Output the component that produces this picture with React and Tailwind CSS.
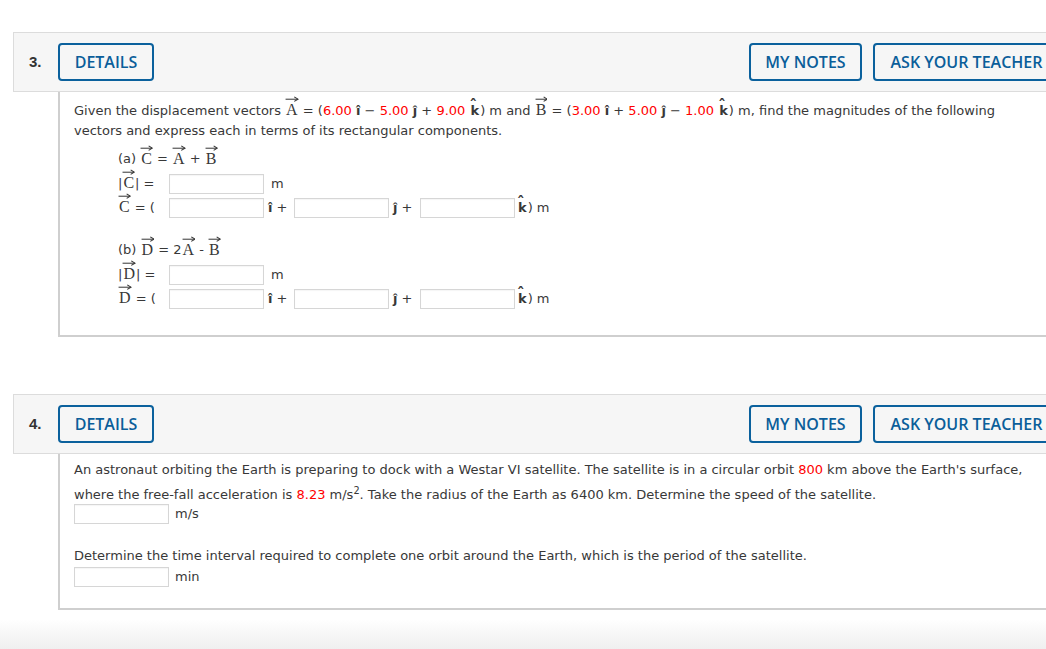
import React from 'react';

const body = { fontFamily: '"DejaVu Sans", Verdana, sans-serif' };

// letter with an arrow drawn over it
const Vec = ({ children }) => (
    <span className="relative inline-block px-[1px] text-[16px] leading-none" style={{ fontFamily: '"Liberation Serif", "Times New Roman", serif' }}>
        {children}
        <svg className="absolute left-0 -top-[6px] w-full h-[6px]" viewBox="0 0 12 6" preserveAspectRatio="none">
            <path d="M0.5 3.2 H11.3" stroke="#333" strokeWidth="1" fill="none" />
            <path d="M8.2 0.8 L11.6 3.2 L8.2 5.4" stroke="#333" strokeWidth="1" fill="none" />
        </svg>
    </span>
);

const Hat = ({ children }) => (
    <span className="relative inline-block font-bold px-[1px]">
        {children}
        <span className="absolute left-[0px] -top-[2px] text-[15px] font-bold leading-none">ˆ</span>
    </span>
);

const Red = ({ children }) => <span className="text-[#f00]">{children}</span>;

const Box = ({ w = 'w-[95px]' }) => (
    <input type="text" className={`${w} h-[20px] border border-[#d6d6d6] bg-white shadow-[inset_0_1px_1px_rgba(0,0,0,0.04)] outline-none`} />
);

const Header = ({ num }) => (
    <div className="flex items-center h-[60px] border border-[#dcdcdc] bg-[#f6f6f6]">
        <span className="w-[44px] pl-[15px] text-[15px] font-bold text-[#333]" style={{ fontFamily: '"Liberation Sans", Arial, sans-serif' }}>{num}.</span>
        <button className="h-[38px] w-[96px] border-2 border-[#0b619d] rounded-[4px] text-[16px] font-semibold text-[#0b5e9a]" style={{ fontFamily: '"Open Sans", sans-serif' }}>
            DETAILS
        </button>
        <div className="ml-auto flex gap-[11px] pr-[14px]">
            <button className="h-[38px] w-[113px] border-2 border-[#0b619d] rounded-[4px] text-[16px] font-semibold text-[#0b5e9a]" style={{ fontFamily: '"Open Sans", sans-serif' }}>
                MY NOTES
            </button>
            <button className="h-[38px] w-[187px] border-2 border-[#0b619d] rounded-[4px] text-[16px] font-semibold text-[#0b5e9a]" style={{ fontFamily: '"Open Sans", sans-serif' }}>
                ASK YOUR TEACHER
            </button>
        </div>
    </div>
);

const VecRows = ({ part, L, expr }) => (
    <div className="pl-[44px]">
        <div className="h-[24px] flex items-center">
            <span>({part})&nbsp;</span><Vec>{L}</Vec><span>&nbsp;=&nbsp;</span>{expr}
        </div>
        <div className="h-[25px] flex items-center">
            <span className="w-[51px]">|<Vec>{L}</Vec>|&nbsp;=</span>
            <Box />
            <span className="ml-[7px]">m</span>
        </div>
        <div className="h-[24px] flex items-center">
            <span className="w-[51px]"><Vec>{L}</Vec>&nbsp;=&nbsp;(</span>
            <Box />
            <span className="w-[30px] pl-[4px]"><b>î</b>&nbsp;+</span>
            <Box />
            <span className="w-[31px] pl-[4px]"><b>ĵ</b>&nbsp;+</span>
            <Box />
            <span className="pl-[2px]"><Hat>k</Hat>)&nbsp;m</span>
        </div>
    </div>
);

export default function App() {
    return (
        <div className="relative w-[1046px] h-[649px] overflow-hidden bg-white text-[13px] text-[#383838]" style={body}>
            <div className="pt-[32px] pl-[13px] w-[1075px]">
                {/* Question 3 */}
                <Header num={3} />
                <div className="ml-[45px] border-l-2 border-b-2 border-[#cfcfcf] pl-[14px] pt-[9px] pb-[24px]">
                    <p className="leading-[20px] w-[960px]">
                        Given the displacement vectors <Vec>A</Vec> = (<Red>6.00</Red> <b>î</b> − <Red>5.00</Red> <b>ĵ</b> + <Red>9.00</Red> <Hat>k</Hat>) m and <Vec>B</Vec> = (<Red>3.00</Red> <b>î</b> + <Red>5.00</Red> <b>ĵ</b> − <Red>1.00</Red> <Hat>k</Hat>) m, find the magnitudes of the following vectors and express each in terms of its rectangular components.
                    </p>
                    <div className="mt-[6px]">
                        <VecRows part="a" L="C" expr={<><Vec>A</Vec><span>&nbsp;+&nbsp;</span><Vec>B</Vec></>} />
                    </div>
                    <div className="mt-[18px]">
                        <VecRows part="b" L="D" expr={<><span>2</span><Vec>A</Vec><span>&nbsp;-&nbsp;</span><Vec>B</Vec></>} />
                    </div>
                </div>

                {/* Question 4 */}
                <div className="mt-[57px]">
                    <Header num={4} />
                    <div className="ml-[45px] border-l-2 border-b-2 border-[#cfcfcf] pl-[14px] pt-[3px] pb-[21px]">
                        <p className="leading-[25px] w-[970px]">
                            An astronaut orbiting the Earth is preparing to dock with a Westar VI satellite. The satellite is in a circular orbit <Red>800</Red> km above the Earth's surface, where the free-fall acceleration is <Red>8.23</Red> m/s<sup className="leading-none">2</sup>. Take the radius of the Earth as 6400 km. Determine the speed of the satellite.
                        </p>
                        <div className="flex items-center -mt-[3px]">
                            <Box />
                            <span className="ml-[6px]">m/s</span>
                        </div>
                        <p className="leading-[20px] mt-[22px]">
                            Determine the time interval required to complete one orbit around the Earth, which is the period of the satellite.
                        </p>
                        <div className="flex items-center mt-[1px]">
                            <Box />
                            <span className="ml-[6px]">min</span>
                        </div>
                    </div>
                </div>
            </div>
            <div className="absolute inset-x-0 bottom-0 h-[30px] bg-gradient-to-b from-white to-[#efefef]" />
        </div>
    );
}
